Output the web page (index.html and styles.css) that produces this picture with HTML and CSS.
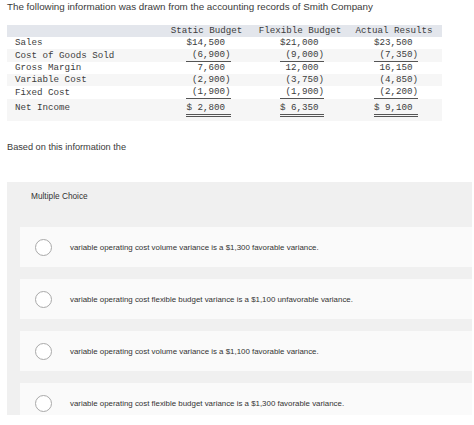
FILE: index.html
```html
<!DOCTYPE html>
<html>
<head>
<meta charset="utf-8">
<link rel="stylesheet" href="styles.css">
</head>
<body>
<p class="title">The following information was drawn from the accounting records of Smith Company</p>
<table class="fin">
  <colgroup><col class="c-label"><col class="c-static"><col class="c-flex"><col class="c-actual"></colgroup>
  <thead>
    <tr class="head"><th></th><th>Static Budget</th><th>Flexible Budget</th><th class="last">Actual Results</th></tr>
  </thead>
  <tbody>
    <tr><td class="lbl">Sales</td><td><span class="v">$14,500 </span></td><td><span class="v">$21,000 </span></td><td class="last"><span class="v">$23,500 </span></td></tr>
    <tr class="alt"><td class="lbl">Cost of Goods Sold</td><td><span class="v ul">(6,900)</span></td><td><span class="v ul">(9,000)</span></td><td class="last"><span class="v ul">(7,350)</span></td></tr>
    <tr class="after"><td class="lbl">Gross Margin</td><td><span class="v">7,600 </span></td><td><span class="v">12,000 </span></td><td class="last"><span class="v">16,150 </span></td></tr>
    <tr class="alt"><td class="lbl">Variable Cost</td><td><span class="v">(2,900)</span></td><td><span class="v">(3,750)</span></td><td class="last"><span class="v">(4,850)</span></td></tr>
    <tr><td class="lbl">Fixed Cost</td><td><span class="v ul">(1,900)</span></td><td><span class="v ul">(1,900)</span></td><td class="last"><span class="v ul">(2,200)</span></td></tr>
    <tr class="alt net"><td class="lbl">Net Income</td><td><span class="v dul">$ 2,800 </span></td><td><span class="v dul">$ 6,350 </span></td><td class="last"><span class="v dul">$ 9,100 </span></td></tr>
  </tbody>
</table>
<p class="question">Based on this information the</p>
<section class="mc">
  <div class="mc-label">Multiple Choice</div>
  <div class="options">
    <div class="opt"><span class="radio"></span><span class="opt-text">variable operating cost volume variance is a $1,300 favorable variance.</span></div>
    <div class="opt"><span class="radio"></span><span class="opt-text">variable operating cost flexible budget variance is a $1,100 unfavorable variance.</span></div>
    <div class="opt"><span class="radio"></span><span class="opt-text">variable operating cost volume variance is a $1,100 favorable variance.</span></div>
    <div class="opt"><span class="radio"></span><span class="opt-text">variable operating cost flexible budget variance is a $1,300 favorable variance.</span></div>
  </div>
</section>
</body>
</html>
```
FILE: styles.css
```css
html, body { margin: 0; padding: 0; background: #fff; }
body {
  font-family: "Liberation Sans", Arial, sans-serif;
  color: #333;
  width: 474px;
  height: 425px;
  overflow: hidden;
}
.title {
  margin: 0;
  padding: 1px 0 0 7px;
  font-size: 9.8px;
  line-height: 12px;
  color: #3a3a3a;
}
.fin {
  margin: 12px 0 0 7px;
  border-collapse: collapse;
  font-family: "Liberation Mono", "Courier New", monospace;
  font-size: 9.2px;
  color: #3c3c3c;
  width: 435px;
}
.c-label { width: 158px; }
.c-static { width: 83px; }
.c-flex { width: 104px; }
.c-actual { width: 90px; }
.fin th, .fin td {
  padding: 0;
  height: 12px;
  line-height: 12px;
  font-weight: normal;
  text-align: center;
  white-space: pre;
}
.fin .last { padding-right: 6px; }
.head th { background: #e3e6ec; height: 12px; }
.fin td.lbl { text-align: left; padding-left: 8px; }
.alt td { background: #f6f6f6; }
.v {
  display: inline-block;
  width: 8ch;
  text-align: right;
  white-space: pre;
  margin-left: 4px;
}
.ul { border-bottom: 1px solid #555; line-height: 12px; }
.net td { height: 19px; vertical-align: top; padding-top: 3px; }
.dul { border-bottom: 3px double #555; line-height: 12px; padding-bottom: 0; }
.question {
  margin: 20px 0 0 7px;
  font-size: 9.2px;
  line-height: 12px;
  color: #3a3a3a;
}
.mc {
  margin: 29px 2px 0 7px;
  background: #f0f0f0;
  height: 233px;
  overflow: hidden;
}
.mc-label {
  font-size: 8.3px;
  line-height: 10px;
  padding: 9px 0 0 24px;
  height: 36px;
  color: #333;
}
.options {
  display: flex;
  flex-direction: column;
  gap: 12px;
  padding-left: 13px;
}
.opt {
  background: #fafafa;
  height: 40px;
  display: flex;
  align-items: center;
}
.radio {
  width: 15px;
  height: 15px;
  border: 1px solid #a9a9a9;
  border-radius: 50%;
  background: #fff;
  margin-left: 15px;
  flex: none;
}
.opt-text {
  margin-left: 18px;
  font-size: 7.9px;
  color: #333;
}
```
